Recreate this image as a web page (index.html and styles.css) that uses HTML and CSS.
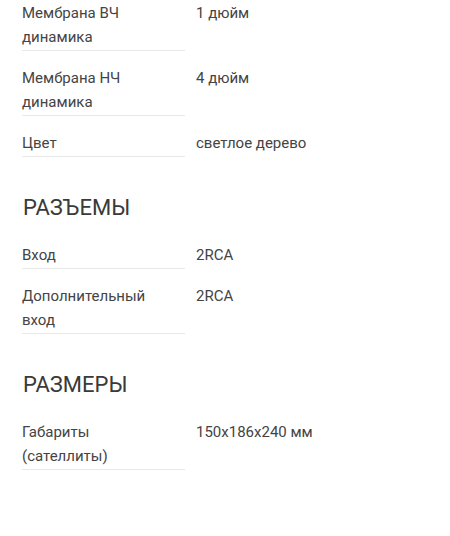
FILE: index.html
```html
<!DOCTYPE html>
<html lang="ru">
<head>
<meta charset="utf-8">
<link rel="stylesheet" href="styles.css">
</head>
<body>
<div class="specs">
  <div class="row"><div class="label">Мембрана ВЧ динамика</div><div class="value">1 дюйм</div></div>
  <div class="row"><div class="label">Мембрана НЧ динамика</div><div class="value">4 дюйм</div></div>
  <div class="row"><div class="label">Цвет</div><div class="value">светлое дерево</div></div>
  <h2 class="heading">РАЗЪЕМЫ</h2>
  <div class="row"><div class="label">Вход</div><div class="value">2RCA</div></div>
  <div class="row"><div class="label">Дополнительный вход</div><div class="value">2RCA</div></div>
  <h2 class="heading">РАЗМЕРЫ</h2>
  <div class="row"><div class="label">Габариты (сателлиты)</div><div class="value">150x186x240 мм</div></div>
</div>
</body>
</html>
```
FILE: styles.css
```css
html, body { margin: 0; padding: 0; background: #fff; }
body { font-family: Roboto, "Noto Sans", sans-serif; color: #444; }
.specs { padding: 1px 22px 0 22px; }
.row { display: grid; grid-template-columns: 163px 1fr; column-gap: 11px; margin-bottom: 15px; font-size: 15px; line-height: 24px; }
.label { padding: 0 20px 1px 0; border-bottom: 1px solid #e8e8e8; }
.heading { margin: 37px 0 21px 1px; font-size: 22px; line-height: 28px; font-weight: 400; color: #3a3a3a; }
```
